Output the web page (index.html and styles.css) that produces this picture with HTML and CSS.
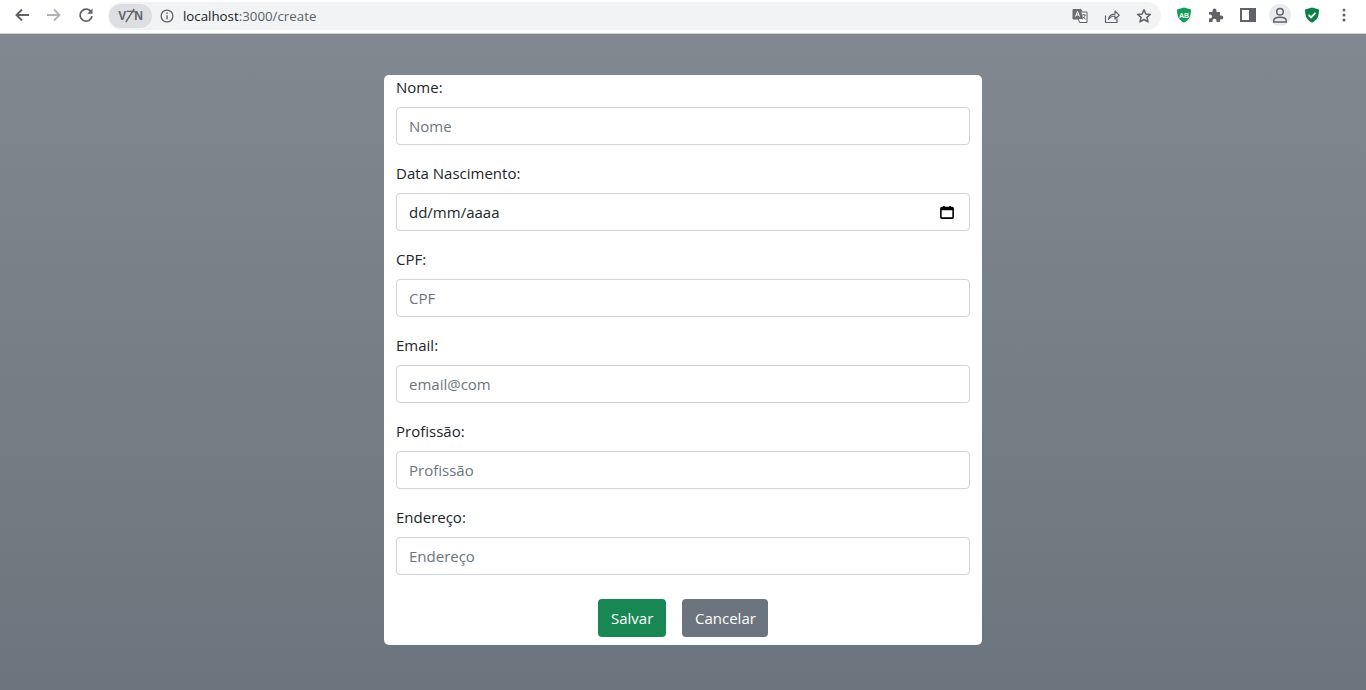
FILE: index.html
```html
<!DOCTYPE html>
<html lang="pt-BR">
<head>
<meta charset="utf-8">
<title>create</title>
<link rel="stylesheet" href="styles.css">
</head>
<body>
<header class="chrome">
  <div class="nav">
    <svg class="ico" viewBox="0 0 16 16"><path d="M15 8H3M8 2.500 2.500 8 8 13.500" fill="none" stroke="#5f6368" stroke-width="1.900"/></svg>
    <svg class="ico" viewBox="0 0 16 16"><path d="M1 8h12M8 2.500 13.500 8 8 13.500" fill="none" stroke="#b0b3b7" stroke-width="1.900"/></svg>
    <svg class="ico" viewBox="0 0 16 16"><path d="M13.300 5.200A6 6 0 1 0 14 9.200" fill="none" stroke="#5f6368" stroke-width="1.800"/><path d="M14.500 1.500v5.300H9.200z" fill="#5f6368"/></svg>
  </div>
  <div class="omnibox">
    <div class="vpn"><span>V</span><svg class="vpn-slash" viewBox="0 0 12 18"><path d="M1 17 11 1M2 4h9v1.500" fill="none" stroke="#5f6368" stroke-width="1.700"/></svg><span>N</span></div>
    <svg class="info" viewBox="0 0 14 14"><circle cx="7" cy="7" r="5.900" fill="none" stroke="#5f6368" stroke-width="1.300"/><path d="M7 6.200v4M7 3.500v1.500" stroke="#5f6368" stroke-width="1.400"/></svg>
    <div class="url"><span class="host">localhost</span>:3000/create</div>
    <div class="omni-actions">
      <svg class="ico" viewBox="0 0 16 16"><path d="M1 1.500h8l1 2.500h5v10.500H7.500L6.500 11H1z" fill="#fff" stroke="#5f6368" stroke-width="1"/><path d="M1 1.500h8l2 9.500H1z" fill="#6b6f73"/><path d="M3.500 8.500 5.500 3.500l2 5M4.200 7h2.600" fill="none" stroke="#fff" stroke-width="1"/><path d="M10 7h4M12 6v1M13.300 7c-.5 2-2 3.500-3 4M10.800 8.500c.5 1 1.500 2 2.800 2.500" fill="none" stroke="#5f6368" stroke-width=".9"/></svg>
      <svg class="ico" viewBox="0 0 16 16"><path d="M1.500 7.500v7h11.500v-4" fill="none" stroke="#5f6368" stroke-width="1.200"/><path d="M4.500 11.500c.5-3.500 3-5.300 6.500-5.300V3l4.200 4.200L11 11V8c-2.500 0-4.800.9-6.500 3.500z" fill="none" stroke="#5f6368" stroke-width="1.200" stroke-linejoin="round"/></svg>
      <svg class="ico" viewBox="0 0 16 16"><path d="M8 1.800 9.800 6l4.600.4-3.500 3 1.100 4.500L8 11.500l-4 2.400 1.100-4.500-3.500-3L6.200 6z" fill="none" stroke="#5f6368" stroke-width="1.500" stroke-linejoin="round"/></svg>
    </div>
  </div>
  <div class="extensions">
    <svg class="ico" viewBox="0 0 16 16"><path d="M8 .5 15 2.500c0 7-2 11-7 13-5-2-7-6-7-13z" fill="#0f9d58"/><text class="ab" x="8" y="10.500" text-anchor="middle">AB</text></svg>
    <svg class="ico" viewBox="0 0 16 16"><path d="M1 5h3.500V3.500a2 2 0 0 1 4 0V5H12v3.500h1.300a2 2 0 0 1 0 4H12V15H8.500v-1.300a2 2 0 0 0-4 0V15H1v-3.500h1a2 2 0 0 0 0-4H1z" fill="#5f6368"/></svg>
    <svg class="ico" viewBox="0 0 16 16"><path d="M1 2h14v12H1z" fill="none" stroke="#5f6368" stroke-width="2"/><path d="M9 2h6v12H9z" fill="#5f6368"/></svg>
    <div class="avatar"><svg class="ico" viewBox="0 0 16 16"><circle cx="8" cy="4.700" r="3.300" fill="none" stroke="#5f6368" stroke-width="1.500"/><path d="M1.800 15v-1.500c0-2.200 3-3.300 6.200-3.300s6.200 1.100 6.200 3.300V15z" fill="none" stroke="#5f6368" stroke-width="1.500"/></svg></div>
    <svg class="ico" viewBox="0 0 16 16"><path d="M8 .5 15 2.500c0 7-2 11-7 13-5-2-7-6-7-13z" fill="#0b8043"/><path d="m4.700 8 2.400 2.400 4.300-4.500" fill="none" stroke="#fff" stroke-width="1.800"/></svg>
    <svg class="ico" viewBox="0 0 16 16"><circle cx="8" cy="3" r="1.500" fill="#5f6368"/><circle cx="8" cy="8" r="1.500" fill="#5f6368"/><circle cx="8" cy="13" r="1.500" fill="#5f6368"/></svg>
  </div>
</header>
<main class="page">
  <form class="card">
    <div class="field"><label class="label" for="nome">Nome:</label><input class="control" id="nome" placeholder="Nome"></div>
    <div class="field"><span class="label">Data Nascimento:</span>
      <div class="control date"><span>dd/mm/aaaa</span>
        <svg class="cal" viewBox="0 0 16 16"><path d="M2 3h12a1 1 0 0 1 1 1v10a1 1 0 0 1-1 1H2a1 1 0 0 1-1-1V4a1 1 0 0 1 1-1z" fill="none" stroke="#000" stroke-width="1.800"/><path d="M1 3h14v3H1zM3.500 1h2v2h-2zM10.500 1h2v2h-2z" fill="#000"/></svg>
      </div>
    </div>
    <div class="field"><label class="label" for="cpf">CPF:</label><input class="control" id="cpf" placeholder="CPF"></div>
    <div class="field"><label class="label" for="email">Email:</label><input class="control" id="email" placeholder="email@com"></div>
    <div class="field"><label class="label" for="prof">Profissão:</label><input class="control" id="prof" placeholder="Profissão"></div>
    <div class="field"><label class="label" for="end">Endereço:</label><input class="control" id="end" placeholder="Endereço"></div>
    <div class="actions">
      <button class="btn salvar" type="button">Salvar</button>
      <button class="btn cancelar" type="button">Cancelar</button>
    </div>
  </form>
</main>
</body>
</html>
```
FILE: styles.css
```css
* { box-sizing: border-box; }
html, body { margin: 0; height: 100%; }
body {
  display: flex;
  flex-direction: column;
  height: 690px;
  overflow: hidden;
  font-family: "Open Sans", "Noto Sans", sans-serif;
  font-size: 15px;
  line-height: 24px;
  color: #212529;
}
.chrome {
  flex: none;
  height: 34px;
  display: flex;
  align-items: center;
  background: #fff;
  border-bottom: 1px solid #d0d2d4;
}
.ico { width: 16px; height: 16px; display: block; flex: none; }
.nav {
  display: flex;
  gap: 16px;
  padding: 0 14px 3px 14px;
}
.omnibox {
  width: 1055px;
  height: 28px;
  margin-top: -2px;
  display: flex;
  align-items: center;
  background: #f1f3f4;
  border-radius: 14px;
}
.vpn {
  width: 43px;
  height: 24px;
  margin-left: 1px;
  display: flex;
  align-items: center;
  justify-content: center;
  background: #dcdee1;
  border-radius: 12px;
  font: bold 12px/24px "Liberation Sans", sans-serif;
  color: #5f6368;
}
.vpn-slash { width: 10px; height: 17px; margin: 0 -1px; }
.info { width: 14px; height: 14px; margin-left: 8px; }
.url {
  margin-left: 9px;
  font-size: 13.3px;
  color: #5f6368;
}
.host { color: #202124; }
.omni-actions {
  margin-left: auto;
  display: flex;
  gap: 16px;
  padding-right: 9px;
}
.extensions {
  display: flex;
  align-items: center;
  gap: 16px;
  padding: 0 14px 3px 15px;
  flex: 1;
}
.extensions .ab { font: bold 7px "Liberation Sans", sans-serif; fill: #fff; }
.avatar {
  width: 22px;
  height: 22px;
  margin: 0 -3px;
  display: flex;
  align-items: center;
  justify-content: center;
  background: #e8eaed;
  border-radius: 50%;
}
.page {
  flex: 1;
  padding-top: 41px;
  background: linear-gradient(#81888f, #6c757d);
}
.card {
  width: 598px;
  height: 570px;
  margin: 0 auto;
  padding: 0 12px;
  background: #fff;
  border-radius: 5px;
}
.field { margin-bottom: 16px; }
.label { display: block; margin-bottom: 8px; height: 24px; }
.control {
  display: block;
  width: 100%;
  height: 38px;
  padding: 6px 12px;
  border: 1px solid #ced4da;
  border-radius: 4px;
  background: #fff;
  font: inherit;
  color: #212529;
  outline: none;
}
.control::placeholder { color: #6c757d; opacity: 1; }
.date {
  display: flex;
  align-items: center;
  justify-content: space-between;
  padding-right: 15px;
}
.cal { width: 14px; height: 14px; }
.actions {
  display: flex;
  justify-content: center;
  gap: 16px;
  padding-top: 8px;
}
.btn {
  height: 38px;
  padding: 0 12px;
  border: 1px solid transparent;
  border-radius: 4px;
  font: inherit;
  color: #fff;
}
.salvar { width: 68px; background: #198754; }
.cancelar { width: 86px; background: #6c757d; }
```
